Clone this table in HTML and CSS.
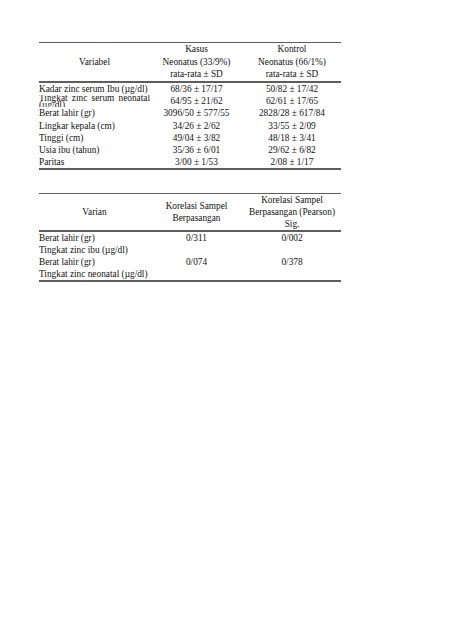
FILE: index.html
```html
<!DOCTYPE html>
<html>
<head>
<meta charset="utf-8">
<link rel="stylesheet" href="styles.css">
</head>
<body>
<div class="page">
  <table class="t1">
    <colgroup><col class="c1"><col class="c2"><col class="c3"></colgroup>
    <thead>
      <tr>
        <th class="lab">Variabel</th>
        <th>Kasus<br>Neonatus (33/9%)<br>rata-rata ± SD</th>
        <th>Kontrol<br>Neonatus (66/1%)<br>rata-rata ± SD</th>
      </tr>
    </thead>
    <tbody>
      <tr><td class="lab">Kadar zinc serum Ibu (µg/dl)</td><td>68/36 ± 17/17</td><td>50/82 ± 17/42</td></tr>
      <tr><td class="lab wrap"><div class="clip"><div class="squeeze">Tingkat zinc serum neonatal (µg/dl)</div></div></td><td>64/95 ± 21/62</td><td>62/61 ± 17/65</td></tr>
      <tr><td class="lab">Berat lahir (gr)</td><td>3096/50 ± 577/55</td><td>2828/28 ± 617/84</td></tr>
      <tr><td class="lab">Lingkar kepala (cm)</td><td>34/26 ± 2/62</td><td>33/55 ± 2/09</td></tr>
      <tr><td class="lab">Tinggi (cm)</td><td>49/04 ± 3/82</td><td>48/18 ± 3/41</td></tr>
      <tr><td class="lab">Usia ibu (tahun)</td><td>35/36 ± 6/01</td><td>29/62 ± 6/82</td></tr>
      <tr><td class="lab">Paritas</td><td>3/00 ± 1/53</td><td>2/08 ± 1/17</td></tr>
    </tbody>
  </table>

  <table class="t2">
    <colgroup><col class="c1"><col class="c2"><col class="c3"></colgroup>
    <thead>
      <tr>
        <th class="lab">Varian</th>
        <th>Korelasi Sampel<br>Berpasangan</th>
        <th>Korelasi Sampel<br>Berpasangan (Pearson)<br>Sig.</th>
      </tr>
    </thead>
    <tbody>
      <tr><td class="lab">Berat lahir (gr)<br>Tingkat zinc ibu (µg/dl)</td><td>0/311</td><td>0/002</td></tr>
      <tr><td class="lab">Berat lahir (gr)<br>Tingkat zinc neonatal (µg/dl)</td><td>0/074</td><td>0/378</td></tr>
    </tbody>
  </table>
</div>
</body>
</html>
```

FILE: styles.css
```css
html, body {
  margin: 0;
  padding: 0;
  background: #ffffff;
}
.page {
  padding: 42px 0 0 39px;
  font-family: "Liberation Serif", "Times New Roman", serif;
  font-size: 9.3px;
  color: #111111;
}
table {
  border-collapse: collapse;
  table-layout: fixed;
  width: 302px;
}
col.c1 { width: 111px; }
col.c2 { width: 93px; }
col.c3 { width: 98px; }
th, td {
  padding: 0;
  font-weight: normal;
  text-align: center;
  vertical-align: middle;
  white-space: nowrap;
}
th.lab, td.lab {
  text-align: left;
}
td.wrap {
  white-space: normal;
}
.t1 th.lab, .t2 th.lab {
  text-align: center;
}
thead tr {
  border-top: 1px solid #5e5e5e;
  border-bottom: 2px solid #5e5e5e;
}
tbody tr:last-child {
  border-bottom: 2px solid #5e5e5e;
}
.t1 th {
  line-height: 12.5px;
  height: 38px;
}
.t1 td {
  line-height: 12.2px;
  height: 12.2px;
}
.clip {
  height: 12.2px;
  overflow: hidden;
}
.squeeze {
  line-height: 7px;
  text-align: justify;
  text-align-last: left;
}
.t2 {
  margin-top: 23px;
}
.t2 th {
  line-height: 12px;
  height: 36px;
}
.t2 td {
  line-height: 12px;
  vertical-align: top;
}
```
